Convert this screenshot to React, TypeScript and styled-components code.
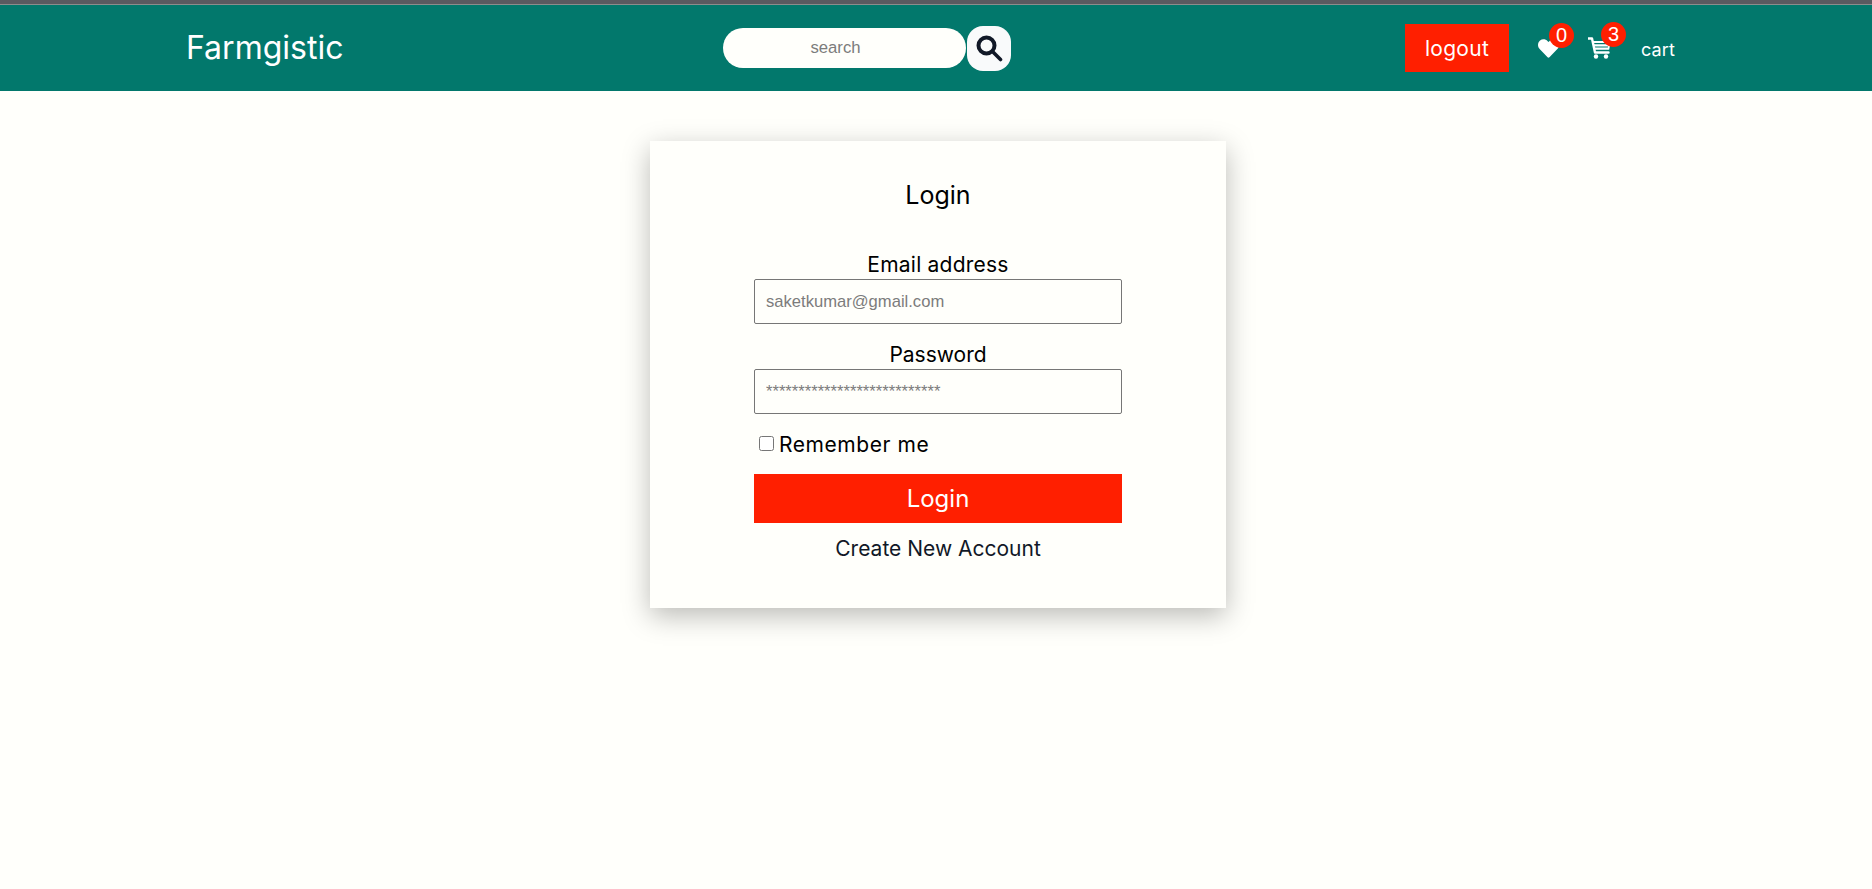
import React from 'react';
import styled, { createGlobalStyle } from 'styled-components';
import { FaHeart } from 'react-icons/fa';

const GlobalStyle = createGlobalStyle`
  html, body, #root {
    margin: 0;
    padding: 0;
    height: 100%;
    background-color: #fffffb;
    font-family: 'Inter', 'Liberation Sans', sans-serif;
  }
  * {
    box-sizing: border-box;
  }
`;

const Page = styled.div`
  display: flex;
  flex-direction: column;
  height: 889px;
  overflow: hidden;
`;

const TopStrip = styled.div`
  flex: none;
  height: 5px;
  background-color: #5a5a60;
  border-bottom: 1px solid #8c8c8c;
`;

const Header = styled.header`
  flex: none;
  display: grid;
  grid-template-columns: 537px 682px auto;
  align-items: center;
  height: 86px;
  padding-left: 186px;
  background-color: #02786c;
  color: #ffffff;
`;

const Brand = styled.div`
  font-size: 32px;
  line-height: 1;
`;

const SearchBox = styled.form`
  display: flex;
  align-items: center;
  gap: 1px;
`;

const SearchInput = styled.input`
  width: 243px;
  height: 40px;
  padding: 0 18px 0 0;
  border: none;
  border-radius: 20px;
  outline: none;
  background-color: #fffffb;
  font-family: 'Liberation Sans', sans-serif;
  font-size: 16.7px;
  text-align: center;
  &::placeholder {
    color: #7c7c7c;
  }
`;

const SearchButton = styled.button`
  display: flex;
  align-items: center;
  justify-content: center;
  width: 44px;
  height: 45px;
  padding: 0;
  border: none;
  border-radius: 16px;
  background-color: #f9fafb;
  color: #111827;
`;

const Actions = styled.div`
  display: flex;
  align-items: center;
`;

const LogoutButton = styled.button`
  width: 104px;
  height: 48px;
  margin-right: 29px;
  border: none;
  background-color: #ff1f00;
  color: #ffffff;
  font-family: inherit;
  font-size: 21px;
  letter-spacing: 0.3px;
`;

const IconLink = styled.a`
  position: relative;
  display: flex;
  width: ${props => props.$width}px;
  color: #ffffff;
  font-size: 21px;
`;

const Badge = styled.span`
  position: absolute;
  top: -15px;
  left: ${props => props.$left}px;
  display: flex;
  align-items: center;
  justify-content: center;
  width: 25px;
  height: 25px;
  border-radius: 50%;
  background-color: #ff1f00;
  font-family: 'Liberation Sans', sans-serif;
  font-size: 20px;
`;

const CartLabel = styled.span`
  font-size: 18px;
  letter-spacing: 0.1px;
  margin-top: 2px;
`;

const Main = styled.main`
  flex: 1;
  padding: 50px 0 0 650px;
`;

const Card = styled.form`
  display: flex;
  flex-direction: column;
  width: 576px;
  height: 467px;
  padding: 39px 104px 0;
  background-color: #fffffb;
  box-shadow: 0 8px 26px rgba(0, 0, 0, 0.27);
`;

const Title = styled.h1`
  margin: 0 0 42px;
  font-size: 25px;
  font-weight: 400;
  line-height: 30px;
  text-align: center;
  color: #000000;
`;

const Field = styled.div`
  display: flex;
  flex-direction: column;
  margin-bottom: 18px;
`;

const FieldLabel = styled.label`
  height: 27px;
  font-size: 21px;
  letter-spacing: ${props => props.$spacing}px;
  line-height: 25px;
  text-align: center;
  color: #000000;
`;

const TextInput = styled.input`
  width: 100%;
  height: 45px;
  padding: 0 11px;
  border: 1px solid #767676;
  border-radius: 2px;
  outline: none;
  background-color: #fffffb;
  font-family: 'Liberation Sans', sans-serif;
  font-size: 16.6px;
  &::placeholder {
    color: #7c7c7c;
  }
`;

const RememberRow = styled.label`
  display: flex;
  align-items: center;
  height: 24px;
  margin-bottom: 18px;
  padding-left: 5px;
  font-size: 21px;
  letter-spacing: 0.57px;
  color: #000000;
`;

const Checkbox = styled.input`
  width: 15px;
  height: 15px;
  margin: -2px 5px 0 0;
`;

const LoginButton = styled.button`
  width: 100%;
  height: 49px;
  margin-bottom: 12px;
  border: none;
  background-color: #ff1f00;
  color: #ffffff;
  font-family: inherit;
  font-size: 24px;
`;

const CreateLink = styled.a`
  font-size: 21px;
  line-height: 27px;
  text-align: center;
  color: #111827;
`;

const SearchIcon = () => (
  <svg width="27" height="27" viewBox="0 0 27 27" fill="none" stroke="currentColor">
    <circle cx="10.5" cy="10.5" r="8" strokeWidth="4" />
    <path d="M16.5 16.5 L24.5 24.5" strokeWidth="3.6" strokeLinecap="round" />
  </svg>
);

const CartIcon = () => (
  <svg width="23" height="22" viewBox="0 0 23 22" fill="none" stroke="currentColor">
    <path d="M0.5 1.5 H4 L7 15.5 H20.5" strokeWidth="2.4" strokeLinecap="round" strokeLinejoin="round" />
    <path d="M5 5 H22 M5.6 8.3 H21.4 M6.3 11.6 H20.6" strokeWidth="2.2" />
    <path d="M21.8 4.5 L20.4 12.5" strokeWidth="1.6" />
    <circle cx="8" cy="19.5" r="2.2" fill="currentColor" stroke="none" />
    <circle cx="18" cy="19.5" r="2.2" fill="currentColor" stroke="none" />
  </svg>
);

export default function App() {
  return (
    <Page>
      <GlobalStyle />
      <TopStrip />
      <Header>
        <Brand>Farmgistic</Brand>
        <SearchBox>
          <SearchInput placeholder="search" />
          <SearchButton type="button">
            <SearchIcon />
          </SearchButton>
        </SearchBox>
        <Actions>
          <LogoutButton type="button">logout</LogoutButton>
          <IconLink $width={50}>
            <FaHeart />
            <Badge $left={11}>0</Badge>
          </IconLink>
          <IconLink $width={53}>
            <CartIcon />
            <Badge $left={13}>3</Badge>
          </IconLink>
          <CartLabel>cart</CartLabel>
        </Actions>
      </Header>
      <Main>
        <Card>
          <Title>Login</Title>
          <Field>
            <FieldLabel $spacing={0.23}>Email address</FieldLabel>
            <TextInput placeholder="saketkumar@gmail.com" />
          </Field>
          <Field>
            <FieldLabel $spacing={0}>Password</FieldLabel>
            <TextInput placeholder="***************************" />
          </Field>
          <RememberRow>
            <Checkbox type="checkbox" />
            Remember me
          </RememberRow>
          <LoginButton type="button">Login</LoginButton>
          <CreateLink>Create New Account</CreateLink>
        </Card>
      </Main>
    </Page>
  );
}
